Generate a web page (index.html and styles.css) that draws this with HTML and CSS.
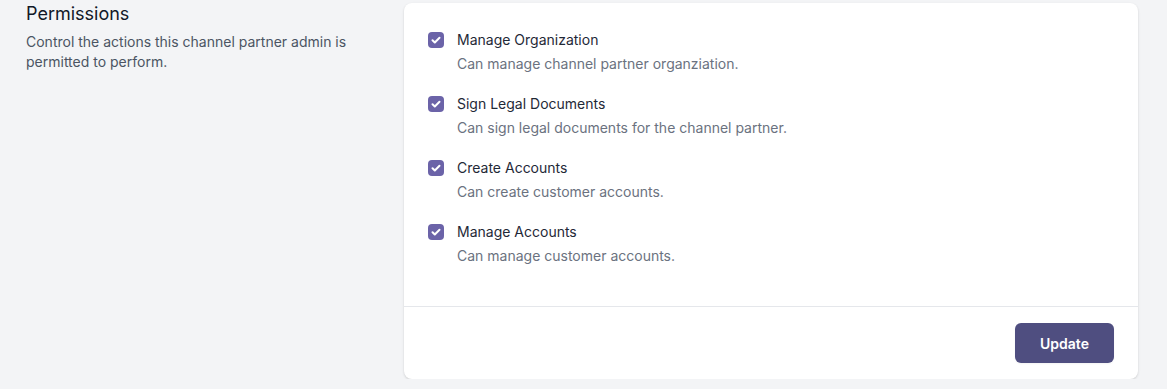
FILE: index.html
```html
<!DOCTYPE html>
<html lang="en">
<head>
<meta charset="utf-8">
<link rel="stylesheet" href="styles.css">
</head>
<body>
<div class="grid">
  <div class="intro">
    <h3 class="title">Permissions</h3>
    <p class="lead">Control the actions this channel partner admin is permitted to perform.</p>
  </div>
  <div class="card">
    <div class="card-body">
      <div class="item">
        <span class="check"><svg viewBox="0 0 16 16"><path d="M4.5 8.2l2.3 2.3 4.7-4.7" /></svg></span>
        <div><div class="label">Manage Organization</div><div class="desc">Can manage channel partner organziation.</div></div>
      </div>
      <div class="item">
        <span class="check"><svg viewBox="0 0 16 16"><path d="M4.5 8.2l2.3 2.3 4.7-4.7" /></svg></span>
        <div><div class="label">Sign Legal Documents</div><div class="desc">Can sign legal documents for the channel partner.</div></div>
      </div>
      <div class="item">
        <span class="check"><svg viewBox="0 0 16 16"><path d="M4.5 8.2l2.3 2.3 4.7-4.7" /></svg></span>
        <div><div class="label">Create Accounts</div><div class="desc">Can create customer accounts.</div></div>
      </div>
      <div class="item">
        <span class="check"><svg viewBox="0 0 16 16"><path d="M4.5 8.2l2.3 2.3 4.7-4.7" /></svg></span>
        <div><div class="label">Manage Accounts</div><div class="desc">Can manage customer accounts.</div></div>
      </div>
    </div>
    <div class="card-footer">
      <button class="btn">Update</button>
    </div>
  </div>
</div>
</body>
</html>
```
FILE: styles.css
```css
* { box-sizing: border-box; }
html, body { margin: 0; padding: 0; }
body {
  background: #f3f4f6;
  font-family: Inter, "Noto Sans", sans-serif;
  color: #111827;
}
.grid {
  display: grid;
  grid-template-columns: 1fr 1fr 1fr;
  column-gap: 24px;
  padding: 0 29px 0 25px;
}
.intro { grid-column: span 1; padding-left: 1px; }
.title {
  margin: 0;
  font-size: 18px;
  line-height: 28px;
  font-weight: 400;
  color: #111827;
}
.lead {
  margin: 4px 0 0;
  font-size: 14px;
  line-height: 20px;
  color: #4b5563;
}
.card {
  grid-column: span 2;
  margin-top: 3px;
  background: #fff;
  border-radius: 8px;
  box-shadow: 0 1px 3px rgba(0,0,0,0.1), 0 1px 2px rgba(0,0,0,0.06);
  overflow: hidden;
}
.card-body {
  padding: 27px 24px 40px;
  display: flex;
  flex-direction: column;
  gap: 20px;
}
.item {
  display: flex;
  align-items: flex-start;
  gap: 13px;
}
.check {
  flex: none;
  width: 16px;
  height: 16px;
  margin-top: 2px;
  border-radius: 4px;
  background: #6b63a8;
  display: flex;
}
.check svg { width: 16px; height: 16px; }
.check path { fill: none; stroke: #fff; stroke-width: 2; stroke-linecap: round; stroke-linejoin: round; }
.label {
  font-size: 14px;
  line-height: 20px;
  font-weight: 400;
  color: #1f2937;
}
.desc {
  margin-top: 4px;
  font-size: 14px;
  line-height: 20px;
  color: #6b7280;
}
.card-footer {
  border-top: 1px solid #e5e7eb;
  padding: 16px 24px;
  display: flex;
  justify-content: flex-end;
}
.btn {
  height: 40px;
  width: 99px;
  border: none;
  border-radius: 6px;
  background: #4f4e80;
  color: #fff;
  font-family: Inter, "Noto Sans", sans-serif;
  font-size: 14px;
  font-weight: 600;
  box-shadow: 0 1px 2px rgba(0,0,0,0.05);
}
```
